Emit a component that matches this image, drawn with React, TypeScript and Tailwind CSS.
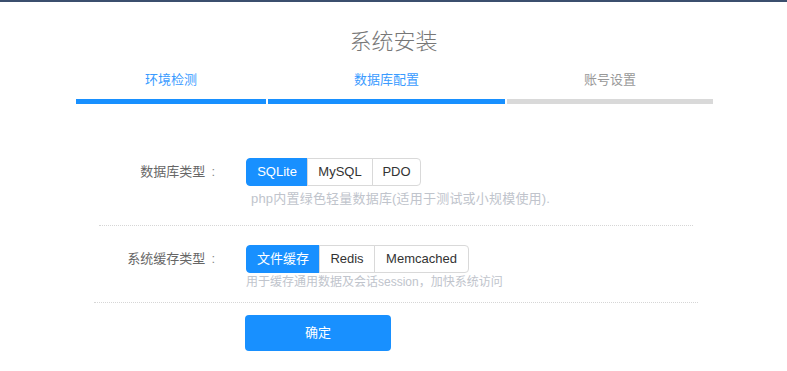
import React from "react";

const font = { fontFamily: '"Liberation Sans", "Noto Sans CJK SC", sans-serif' };

function Group({ items }: { items: { label: string; w: string; active?: boolean }[] }) {
  return (
    <div className="flex h-[28px]">
      {items.map((it, i) => (
        <div
          key={it.label}
          className={
            "flex items-center justify-center text-[13px] border " +
            it.w +
            " " +
            (it.active
              ? "bg-[#1890ff] border-[#1890ff] text-white"
              : "bg-white border-[#d9d9d9] text-[#333] -ml-px") +
            (i === 0 ? " rounded-l-[4px]" : "") +
            (i === items.length - 1 ? " rounded-r-[4px]" : "")
          }
        >
          {it.label}
        </div>
      ))}
    </div>
  );
}

function Label({ text }: { text: string }) {
  return (
    <div className="w-[127px] flex justify-end items-center text-[13px] text-[#666]">
      <span>{text}</span>
      <span className="ml-[6px] mr-[6px] text-[#888]">:</span>
    </div>
  );
}

export default function App() {
  return (
    <div className="w-[787px] h-[371px] bg-white border-t-2 border-[#3b4f6e]" style={font}>
      <div className="pt-[25px] text-center text-[22px] leading-[30px] text-[#777] font-light">系统安装</div>
      <div className="mt-[13px] ml-[76px] flex w-[637px]">
        <div className="w-[190px] flex flex-col items-center">
          <div className="text-[13px] leading-[20px] text-[#3a9bff]">环境检测</div>
          <div className="mt-[9px] h-[5px] w-full bg-[#1890ff]" />
        </div>
        <div className="ml-[2px] w-[237px] flex flex-col items-center">
          <div className="text-[13px] leading-[20px] text-[#3a9bff]">数据库配置</div>
          <div className="mt-[9px] h-[5px] w-full bg-[#1890ff]" />
        </div>
        <div className="ml-[2px] w-[206px] flex flex-col items-center">
          <div className="text-[13px] leading-[20px] text-[#999]">账号设置</div>
          <div className="mt-[9px] h-[5px] w-full bg-[#d9d9d9]" />
        </div>
      </div>

      <div className="ml-[94px] w-[604px]">
        <div className="mt-[54px] flex items-center">
          <Label text="数据库类型" />
          <div className="ml-[25px]">
            <Group
              items={[
                { label: "SQLite", w: "w-[62px]", active: true },
                { label: "MySQL", w: "w-[66px]" },
                { label: "PDO", w: "w-[49px]" },
              ]}
            />
          </div>
        </div>
        <div className="mt-[4px] ml-[157px] text-[13px] leading-[18px] text-[#c0c4cc] tracking-[0.2px]">
          php内置绿色轻量数据库(适用于测试或小规模使用).
        </div>
        <div className="mt-[17px] mx-[5px] border-t border-dotted border-[#d6d6d6]" />

        <div className="mt-[19px] flex items-center">
          <Label text="系统缓存类型" />
          <div className="ml-[25px]">
            <Group
              items={[
                { label: "文件缓存", w: "w-[74px]", active: true },
                { label: "Redis", w: "w-[56px]" },
                { label: "Memcached", w: "w-[95px]" },
              ]}
            />
          </div>
        </div>
        <div className="mt-[1px] ml-[152px] text-[12px] leading-[16px] text-[#c0c4cc]">
          用于缓存通用数据及会话session，加快系统访问
        </div>
        <div className="mt-[12px] border-t border-dotted border-[#d6d6d6]" />

        <div className="mt-[12px] ml-[151px] w-[146px] h-[36px] rounded-[4px] bg-[#1890ff] flex items-center justify-center text-white text-[13px]">
          确定
        </div>
      </div>
    </div>
  );
}
